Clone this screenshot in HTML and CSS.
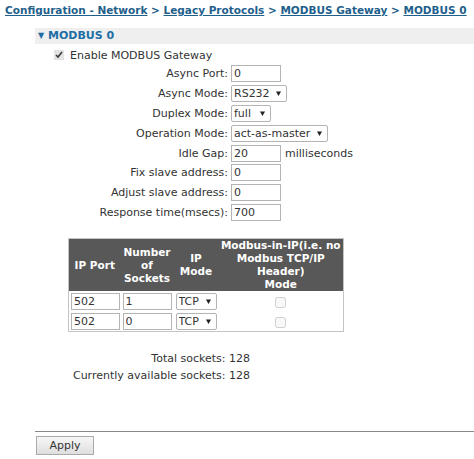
FILE: index.html
```html
<!DOCTYPE html>
<html lang="en">
<head>
    <meta charset="UTF-8">
    <title>MODBUS 0</title>
    <link rel="stylesheet" href="styles.css">
</head>
<body>
    <div class="crumbs">
        <a href="#">Configuration - Network</a> &gt;
        <a href="#">Legacy Protocols</a> &gt;
        <a href="#">MODBUS Gateway</a> &gt;
        <a href="#">MODBUS 0</a>
    </div>

    <div class="section">
        <div class="section-head"><span class="arrow">&#9660;</span> MODBUS 0</div>

        <label class="enable">
            <input type="checkbox" checked>
            <span>Enable MODBUS Gateway</span>
        </label>

        <div class="fields">
            <div class="field">
                <label>Async Port:</label>
                <input type="text" value="0">
            </div>
            <div class="field">
                <label>Async Mode:</label>
                <select class="sel-async"><option>RS232</option></select>
            </div>
            <div class="field">
                <label>Duplex Mode:</label>
                <select class="sel-duplex"><option>full</option></select>
            </div>
            <div class="field">
                <label>Operation Mode:</label>
                <select class="sel-op"><option>act-as-master</option></select>
            </div>
            <div class="field">
                <label>Idle Gap:</label>
                <input type="text" value="20">
                <span class="unit">milliseconds</span>
            </div>
            <div class="field">
                <label>Fix slave address:</label>
                <input type="text" value="0">
            </div>
            <div class="field">
                <label>Adjust slave address:</label>
                <input type="text" value="0">
            </div>
            <div class="field">
                <label>Response time(msecs):</label>
                <input type="text" value="700">
            </div>
        </div>

        <table class="ports">
            <colgroup>
                <col class="c-port">
                <col class="c-num">
                <col class="c-mode">
                <col class="c-hdr">
            </colgroup>
            <thead>
                <tr>
                    <th>IP Port</th>
                    <th>Number<br>of<br>Sockets</th>
                    <th>IP<br>Mode</th>
                    <th>Modbus-in-IP(i.e. no<br>Modbus TCP/IP<br>Header)<br>Mode</th>
                </tr>
            </thead>
            <tbody>
                <tr>
                    <td><input type="text" value="502"></td>
                    <td><input type="text" value="1"></td>
                    <td><select class="sel-tcp"><option>TCP</option></select></td>
                    <td class="chk"><input type="checkbox" disabled></td>
                </tr>
                <tr>
                    <td><input type="text" value="502"></td>
                    <td><input type="text" value="0"></td>
                    <td><select class="sel-tcp"><option>TCP</option></select></td>
                    <td class="chk"><input type="checkbox" disabled></td>
                </tr>
            </tbody>
        </table>

        <div class="totals">
            <div class="total-row">Total sockets: 128</div>
            <div class="total-row">Currently available sockets: 128</div>
        </div>

        <div class="actions">
            <button>Apply</button>
        </div>
    </div>
</body>
</html>
```

FILE: styles.css
```css
body {
    font-family: "DejaVu Sans", Verdana, sans-serif;
    font-size: 11px;
    color: #333;
    background-color: #fff;
    margin: 0;
    padding: 0;
}
.crumbs {
    font-weight: bold;
    font-size: 10.5px;
    color: #1f5f8b;
    padding: 4px 0 0 5px;
    white-space: nowrap;
}
.crumbs a {
    color: #1f5f8b;
    text-decoration: underline;
}
.section {
    margin-left: 35px;
    margin-top: 12px;
}
.section-head {
    background-color: #efefef;
    color: #1d6ea5;
    font-weight: bold;
    height: 16px;
    line-height: 16px;
    padding-left: 3px;
}
.section-head .arrow {
    font-size: 8px;
    vertical-align: 1px;
}
.enable {
    display: flex;
    align-items: center;
    margin: 3px 0 0 18px;
    height: 16px;
}
.enable input {
    margin: 0 6px 0 1px;
    width: 10px;
    height: 10px;
    accent-color: #e4e4e4;
}
.fields {
    margin-top: 1px;
}
.field {
    display: flex;
    align-items: center;
    height: 19.8px;
}
.field label {
    width: 193px;
    text-align: right;
    padding-right: 3px;
}
input[type="text"] {
    font-family: inherit;
    font-size: 11px;
    color: #333;
    width: 50px;
    height: 17px;
    box-sizing: border-box;
    border: 1px solid #b4b4b4;
    padding: 0 2px;
    margin: 0;
}
/* selects with a small black arrow, drawn as an svg background */
select {
    appearance: none;
    -webkit-appearance: none;
    font-family: inherit;
    font-size: 11px;
    color: #333;
    height: 17px;
    box-sizing: border-box;
    border: 1px solid #b4b4b4;
    border-radius: 2px;
    background: #fff url("data:image/svg+xml;utf8,<svg xmlns='http://www.w3.org/2000/svg' width='5' height='5'><path d='M0 0.5h5L2.5 5z' fill='%23222'/></svg>") no-repeat right 5px center;
    padding: 0 12px 0 2px;
    margin: 0;
}
.sel-async { width: 56px; }
.sel-duplex { width: 40px; }
.sel-op { width: 97px; }
.sel-tcp { width: 41px; }
.unit {
    margin-left: 4px;
}
.ports {
    margin: 16px 0 0 33px;
    border-collapse: collapse;
    border: 1px solid #c4c4c4;
    table-layout: fixed;
    width: 275px;
}
.c-port { width: 52px; }
.c-num { width: 53px; }
.c-mode { width: 45px; }
.c-hdr { width: 125px; }
.ports th {
    background-color: #585858;
    color: #fff;
    font-weight: bold;
    font-size: 10.5px;
    line-height: 13px;
    padding: 0;
    text-align: center;
    vertical-align: middle;
    height: 52px;
    white-space: nowrap;
}
.ports td {
    padding: 2px 0 1px 2px;
    height: 17px;
    text-align: left;
}
.ports td input[type="text"] {
    width: 49px;
}
.ports td.chk {
    text-align: center;
    padding-left: 0;
}
.chk input {
    width: 11px;
    height: 11px;
    margin: 0 0 0 0;
    vertical-align: middle;
}
.totals {
    margin-top: 18px;
    width: 215px;
    text-align: right;
}
.total-row {
    line-height: 17px;
}
.actions {
    margin-top: 47px;
    border-top: 1px solid #888;
    padding-top: 4px;
}
button {
    font-family: inherit;
    font-size: 11px;
    color: #333;
    width: 58px;
    height: 19px;
    border: 1px solid #aaa;
    background: linear-gradient(#f7f7f7, #dedede);
    padding: 0;
    margin-left: 1px;
}
```
